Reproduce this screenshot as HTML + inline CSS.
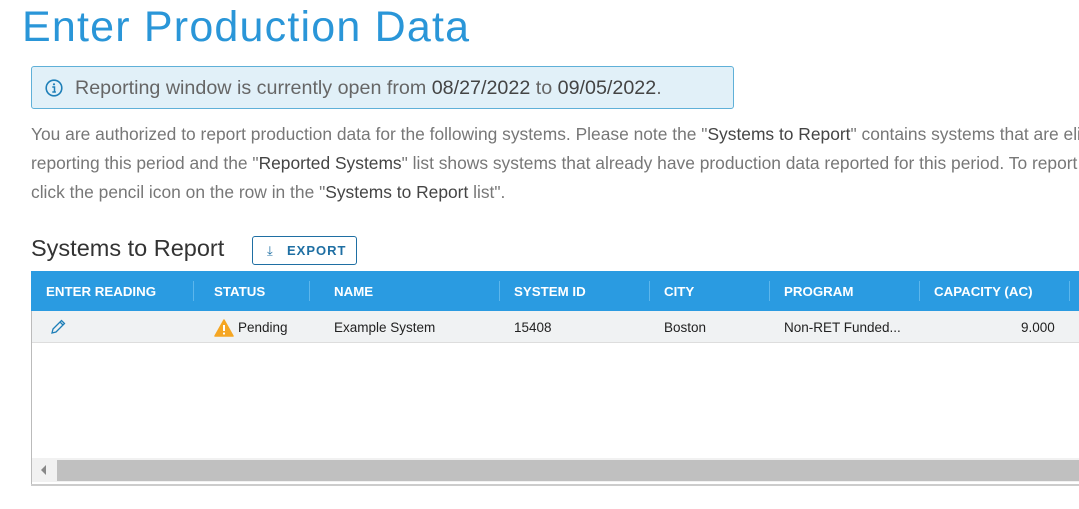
<!DOCTYPE html>
<html><head><style>
body{margin:0;width:1079px;height:509px;overflow:hidden;background:#fff;font-family:"Liberation Sans",sans-serif;position:relative}
.a{position:absolute;white-space:nowrap}
h1{position:absolute;left:22px;top:3px;margin:0;font-weight:normal;font-size:43px;color:#2a96d8;letter-spacing:1.2px}
.alert{position:absolute;left:31px;top:66px;width:703px;height:43px;background:#e1f0f8;border:1px solid #5fb0d8;border-radius:3px;box-sizing:border-box}
.alert span{position:absolute;left:43px;top:10px;font-size:19.7px;color:#666}
.alert b{font-weight:normal;color:#444}
.p{left:31px;font-size:17.4px;color:#777}
.p b{font-weight:normal;color:#444}
.th{top:271px;height:40px;background:#2a9be1;left:31px;width:1048px;position:absolute}
.th span{position:absolute;top:13px;color:#fff;font-weight:bold;font-size:13.3px}
.sep{position:absolute;top:10px;width:1px;height:20px;background:#5cb6ec}
.row{position:absolute;left:32px;top:311px;width:1047px;height:31px;background:#f0f2f3;border-bottom:1px solid #ddd}
.row span{position:absolute;top:9px;font-size:13.5px;color:#222}
</style></head><body>
<h1>Enter Production Data</h1>
<div class="alert">
<svg style="position:absolute;left:13px;top:12px" width="18" height="18" viewBox="0 0 18 18"><circle cx="9" cy="9" r="7.8" fill="none" stroke="#1e7fb8" stroke-width="1.6"/><circle cx="9" cy="5.3" r="1.1" fill="#1e7fb8"/><path d="M7.3 8h2.2v5M7.3 13h3.6" stroke="#1e7fb8" stroke-width="1.5" fill="none"/></svg>
<span>Reporting window is currently open from <b>08/27/2022</b> to <b>09/05/2022</b>.</span></div>
<div class="a p" style="top:124px">You are authorized to report production data for the following systems. Please note the "<b>Systems to Report</b>" contains systems that are eli</div>
<div class="a p" style="top:153px">reporting this period and the "<b>Reported Systems</b>" list shows systems that already have production data reported for this period. To report</div>
<div class="a p" style="top:182px">click the pencil icon on the row in the "<b>Systems to Report</b> list".</div>
<div class="a" style="left:31px;top:235px;font-size:23.5px;color:#333">Systems to Report</div>
<div class="a" style="left:252px;top:236px;width:105px;height:29px;border:1px solid #1f6fa3;border-radius:3px;box-sizing:border-box;color:#1f6fa3;font-size:13px;font-weight:bold;letter-spacing:1px">
<span style="position:absolute;left:14px;top:6px;font-weight:normal">⤓</span><span style="position:absolute;left:34px;top:6px">EXPORT</span></div>
<div style="position:absolute;left:31px;top:271px;width:1px;height:214px;background:#bbb"></div>
<div class="th">
<span style="left:15px">ENTER READING</span><div class="sep" style="left:162px"></div>
<span style="left:183px">STATUS</span><div class="sep" style="left:278px"></div>
<span style="left:303px">NAME</span><div class="sep" style="left:468px"></div>
<span style="left:483px">SYSTEM ID</span><div class="sep" style="left:618px"></div>
<span style="left:633px">CITY</span><div class="sep" style="left:738px"></div>
<span style="left:753px">PROGRAM</span><div class="sep" style="left:888px"></div>
<span style="left:903px">CAPACITY (AC)</span><div class="sep" style="left:1038px"></div>
</div>
<div class="row">
<svg style="position:absolute;left:17px;top:7px" width="18" height="18" viewBox="0 0 18 18"><path d="M3 15l1-4L12.5 2.5l3 3L7 14z M11 4l3 3" fill="none" stroke="#1e7fb8" stroke-width="1.3"/></svg>
<svg style="position:absolute;left:182px;top:8px" width="20" height="18" viewBox="0 0 20 18"><path d="M10 1L19 17H1z" fill="#f5a623" stroke="#f5a623" stroke-linejoin="round" stroke-width="1.5"/><path d="M10 6v6" stroke="#fff" stroke-width="2"/><circle cx="10" cy="14.5" r="1.1" fill="#fff"/></svg>
<span style="left:206px">Pending</span>
<span style="left:302px">Example System</span>
<span style="left:482px">15408</span>
<span style="left:632px">Boston</span>
<span style="left:752px">Non-RET Funded...</span>
<span style="left:989px">9.000</span>
</div>
<div style="position:absolute;left:32px;top:458px;width:1047px;height:24px;background:#f1f1f1"></div>
<div style="position:absolute;left:57px;top:460px;width:1022px;height:21px;background:#c0c0c0"></div>
<div style="position:absolute;left:41px;top:465px;width:0;height:0;border-top:5px solid transparent;border-bottom:5px solid transparent;border-right:5px solid #888"></div>
<div style="position:absolute;left:31px;top:484px;width:1048px;height:2px;background:#ccc"></div>
</body></html>
